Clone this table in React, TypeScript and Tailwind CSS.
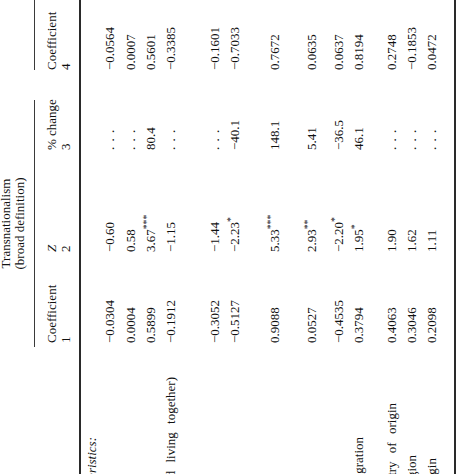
import React from 'react'

type Row = {
  h: string
  label?: string
  lc?: string
  c1?: string
  c2?: string
  s2?: string
  c3?: string | null
  c4?: string
}

const ROWS: Row[] = [
  { h: 'h-[18px]', label: 'Individual characteristics:', lc: 'mr-[94px] italic' },
  { h: 'h-[21px]', c1: '−0.0304', c2: '−0.60', c3: null, c4: '−0.0564' },
  { h: 'h-5', c1: '0.0004', c2: '0.58', c3: null, c4: '0.0007' },
  { h: 'h-5', c1: '0.5899', c2: '3.67', s2: '***', c3: '80.4', c4: '0.5601' },
  { h: 'h-[44px]', label: 'Couple (married and living together)', lc: 'mr-[34px]', c1: '−0.1912', c2: '−1.15', c3: null, c4: '−0.3385' },
  { h: 'h-5', c1: '−0.3052', c2: '−1.44', c3: null, c4: '−0.1601' },
  { h: 'h-[40px]', c1: '−0.5127', c2: '−2.23', s2: '*', c3: '−40.1', c4: '−0.7033' },
  { h: 'h-[37px]', c1: '0.9088', c2: '5.33', s2: '***', c3: '148.1', c4: '0.7672' },
  { h: 'h-[27px]', c1: '0.0527', c2: '2.93', s2: '**', c3: '5.41', c4: '0.0635' },
  { h: 'h-5', c1: '−0.4535', c2: '−2.20', s2: '*', c3: '−36.5', c4: '0.0637' },
  { h: 'h-[33px]', label: 'Family migration', lc: 'mr-[94px]', c1: '0.3794', c2: '1.95', s2: '*', c3: '46.1', c4: '0.8194' },
  { h: 'h-5', label: 'Visits to country of origin', lc: 'mr-[60px]', c1: '0.4063', c2: '1.90', c3: null, c4: '0.2748' },
  { h: 'h-5', label: 'Contacts in region', lc: 'mr-[112px]', c1: '0.3046', c2: '1.62', c3: null, c4: '−0.1853' },
  { h: 'h-5', label: 'Friends in country of origin', lc: 'mr-[115px]', c1: '0.2098', c2: '1.11', c3: null, c4: '0.0472' },
]

function Dots() {
  return <span className="tracking-[1px]">. . .</span>
}

function TableRow({ r }: { r: Row }) {
  const data = r.c1 !== undefined
  return (
    <div className={`flex ${r.h}`}>
      <div className="w-[131px] shrink-0 flex justify-end overflow-hidden whitespace-nowrap [word-spacing:5px]">
        {r.label && <span className={r.lc}>{r.label}</span>}
      </div>
      {data && (
        <>
          <div className="w-[91px] shrink-0">{r.c1}</div>
          <div className="w-[102px] shrink-0">
            {r.c2}
            {r.s2 && <sup>{r.s2}</sup>}
          </div>
          <div className="w-[80px] shrink-0">{r.c3 ? r.c3 : <Dots />}</div>
          <div className="flex-1 whitespace-nowrap">{r.c4}</div>
        </>
      )}
    </div>
  )
}

export default function App() {
  return (
    <div className="w-[474px] h-[474px] overflow-hidden bg-white">
      <div className="w-[474px] h-[474px] -rotate-90 font-['Liberation_Serif',serif] text-[13px] text-[#111]">
        {/* spanner headings */}
        <div className="flex h-[35px]">
          <div className="w-[127px] shrink-0" />
          <div className="w-[247px] shrink-0 border-b border-[#3a3a3a] text-center leading-[14px]">
            <div className="-mt-px">Transnationalism</div>
            <div>(broad definition)</div>
          </div>
          <div className="w-[30px] shrink-0" />
          <div className="flex-1 border-b border-[#3a3a3a]" />
        </div>

        {/* column headings */}
        <div className="flex h-[46px] pt-[10px] leading-[14px] border-b-2 border-[#2a2a2a]">
          <div className="w-[131px] shrink-0" />
          <div className="w-[91px] shrink-0">
            <div>Coefficient</div>
            <div>1</div>
          </div>
          <div className="w-[102px] shrink-0">
            <div className="italic">Z</div>
            <div>2</div>
          </div>
          <div className="w-[80px] shrink-0">
            <div>% change</div>
            <div>3</div>
          </div>
          <div className="flex-1">
            <div>Coefficient</div>
            <div>4</div>
          </div>
        </div>

        {/* body */}
        <div className="pt-px leading-5">
          {ROWS.map((r, i) => (
            <TableRow key={i} r={r} />
          ))}
        </div>
        <div className="mt-3 border-t-2 border-[#2a2a2a]" />
      </div>
    </div>
  )
}
